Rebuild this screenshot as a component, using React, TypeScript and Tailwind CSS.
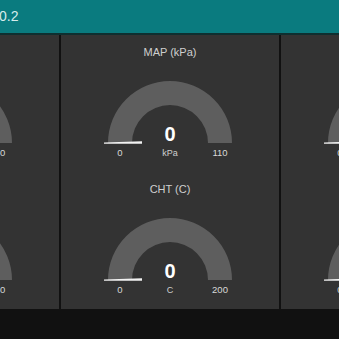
import React from 'react';

type GaugeProps = {
  title: string;
  unit: string;
  min: number;
  max: number;
  value: number;
};

// half-ring gauge as drawn by the dashboard
function Gauge({ title, unit, min, max, value }: GaugeProps) {
  const cx = 109;
  const cy = 74;
  const R = 62;
  const r = 38;
  return (
    <div className="flex h-[137px] flex-col">
      <div className="flex h-[34px] items-center justify-center text-[11px] text-[#cfcfcf]">{title}</div>
      <svg width="218" height="103" viewBox="0 0 218 103">
        <path
          d={`M ${cx - R} ${cy} A ${R} ${R} 0 0 1 ${cx + R} ${cy} L ${cx + r} ${cy} A ${r} ${r} 0 0 0 ${cx - r} ${cy} Z`}
          fill="#5e5e5e"
        />
        <polygon points={`${cx - 66},${cy - 0.5} ${cx - 28},${cy - 1.8} ${cx - 28},${cy + 0.8} ${cx - 66},${cy + 0.8}`} fill="#f2f2f2" />
        <text x={cx} y={cy - 2} textAnchor="middle" fontSize="20" fontWeight="700" fill="#ffffff" fontFamily="'Liberation Sans', Arial, sans-serif">
          {value}
        </text>
        <text x={cx} y={cy + 13} textAnchor="middle" fontSize="9" fill="#cfcfcf" fontFamily="'Liberation Sans', Arial, sans-serif">
          {unit}
        </text>
        <text x={cx - 50} y={cy + 13} textAnchor="middle" fontSize="9.5" fill="#d8d8d8" fontFamily="'Liberation Sans', Arial, sans-serif">
          {min}
        </text>
        <text x={cx + 50} y={cy + 13} textAnchor="middle" fontSize="9.5" fill="#d8d8d8" fontFamily="'Liberation Sans', Arial, sans-serif">
          {max}
        </text>
      </svg>
    </div>
  );
}

function Panel({ gauges }: { gauges: GaugeProps[] }) {
  return (
    <div className="w-[218px] shrink-0 bg-[#333333]">
      {gauges.map((g) => (
        <Gauge key={g.title} {...g} />
      ))}
    </div>
  );
}

export default function App() {
  const left: GaugeProps[] = [
    { title: 'RPM', unit: 'rpm', min: 0, max: 60, value: 0 },
    { title: 'EGT (C)', unit: 'C', min: 0, max: 60, value: 0 },
  ];
  const center: GaugeProps[] = [
    { title: 'MAP (kPa)', unit: 'kPa', min: 0, max: 110, value: 0 },
    { title: 'CHT (C)', unit: 'C', min: 0, max: 200, value: 0 },
  ];
  const right: GaugeProps[] = [
    { title: 'TPS (%)', unit: '%', min: 0, max: 100, value: 0 },
    { title: 'IAT (C)', unit: 'C', min: 0, max: 100, value: 0 },
  ];

  return (
    <div className="h-[339px] w-[339px] overflow-hidden bg-[#111111] font-['Liberation_Sans',Arial,sans-serif]">
      <div className="flex h-[33px] items-center bg-[#0a7b7f] text-[14px] text-[#d6ecec]">
        <span className="-ml-[1px]">0.2</span>
      </div>
      <div className="h-[2px] bg-[#0f2f30]" />
      <div className="-ml-[159px] flex gap-[2px]">
        <Panel gauges={left} />
        <Panel gauges={center} />
        <Panel gauges={right} />
      </div>
    </div>
  );
}
